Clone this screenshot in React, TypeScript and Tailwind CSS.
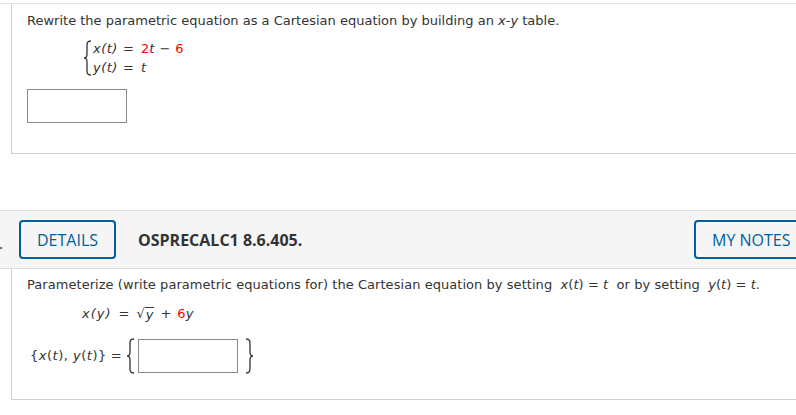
import React from "react";

const Brace = ({ h, className }: { h: number; className?: string }) => (
  <svg width="9" height={h} viewBox={`0 0 9 ${h}`} className={className} fill="none" stroke="#333" strokeWidth="1.3">
    <path d={`M8 1 C4 1 4 3 4 6 L4 ${h / 2 - 4} C4 ${h / 2 - 1} 3 ${h / 2} 1 ${h / 2} C3 ${h / 2} 4 ${h / 2 + 1} 4 ${h / 2 + 4} L4 ${h - 6} C4 ${h - 3} 4 ${h - 1} 8 ${h - 1}`} />
  </svg>
);

const BraceR = ({ h, className }: { h: number; className?: string }) => (
  <svg width="9" height={h} viewBox={`0 0 9 ${h}`} className={className} fill="none" stroke="#333" strokeWidth="1.3">
    <path d={`M1 1 C5 1 5 3 5 6 L5 ${h / 2 - 4} C5 ${h / 2 - 1} 6 ${h / 2} 8 ${h / 2} C6 ${h / 2} 5 ${h / 2 + 1} 5 ${h / 2 + 4} L5 ${h - 6} C5 ${h - 3} 5 ${h - 1} 1 ${h - 1}`} />
  </svg>
);

export default function App() {
  const verd = { fontFamily: '"DejaVu Sans", Verdana, sans-serif' };
  return (
    <div className="w-[796px] h-[415px] bg-white overflow-hidden text-[#333]" style={verd}>
      <div className="h-[3px]" />
      <div className="border-t border-[#e3e3e3]">
        <div className="ml-[11px] border-l border-b border-[#cfcfcf] h-[150px] pl-[15px] pt-[9px] text-[13px] leading-[16px]">
          <div>
            Rewrite the parametric equation as a Cartesian equation by building an <i>x</i>-<i>y</i> table.
          </div>
          <div className="flex items-center ml-[56px] mt-[10px]">
            <Brace h={36} />
            <div className="leading-[19px] ml-[1px]">
              <div className="flex">
                <span className="w-[30px] italic tracking-[0.5px]">x(t)</span>
                <span className="w-[18px]">=</span>
                <span className="text-[#f00]">2</span>
                <i>t</i>
                <span className="mx-[5px]">−</span>
                <span className="text-[#f00]">6</span>
              </div>
              <div className="flex">
                <span className="w-[30px] italic tracking-[0.5px]">y(t)</span>
                <span className="w-[18px]">=</span>
                <i>t</i>
              </div>
            </div>
          </div>
          <div className="mt-[12px] w-[100px] h-[34px] border border-[#8a8a8a]" />
        </div>
      </div>
      <div className="h-[56px]" />
      <div
        className="h-[59px] bg-[#f5f5f5] border-t border-b border-[#dcdcdc] flex items-center relative"
        style={{ fontFamily: '"Open Sans", sans-serif' }}
      >
        <span className="absolute left-[-1px] top-[20px] text-[16px]">.</span>
        <div className="ml-[19px] w-[97px] h-[39px] border-2 border-[#00609c] rounded-[4px] flex items-center justify-center text-[16px] text-[#00609c] font-medium">
          DETAILS
        </div>
        <div className="ml-[22px] text-[16px] font-bold text-[#333]">OSPRECALC1 8.6.405.</div>
        <div className="ml-auto mr-[-20px] w-[122px] h-[39px] border-2 border-[#00609c] rounded-[4px] flex items-center pl-[16px] text-[16px] text-[#00609c] font-medium">
          MY NOTES
        </div>
      </div>
      <div className="ml-[11px] border-l border-b border-[#cfcfcf] h-[131px] pl-[15px] pt-[8px] text-[13px] leading-[16px]">
        <div className="tracking-[0.05px]">
          Parameterize (write parametric equations for) the Cartesian equation by setting&nbsp; <i>x</i>(<i>t</i>) = <i>t</i>&nbsp; or by setting&nbsp; <i>y</i>(<i>t</i>) = <i>t</i>.
        </div>
        <div className="flex items-end ml-[55px] mt-[11px] h-[18px]">
          <span className="italic tracking-[1px]">x(y)</span>
          <span className="mx-[7px]">=</span>
          <span>√</span>
          <span className="border-t border-[#333] italic leading-[14px] px-[1px]">y</span>
          <span className="mx-[6px]">+</span>
          <span className="text-[#f00]">6</span>
          <i>y</i>
        </div>
        <div className="flex items-center mt-[16px] ml-[3px]">
          <span className="tracking-[0.5px]">{"{"}<i>x</i>(<i>t</i>), <i>y</i>(<i>t</i>){"}"}</span>
          <span className="ml-[4px]">=</span>
          <Brace h={36} className="ml-[4px]" />
          <div className="ml-[3px] w-[100px] h-[34px] border border-[#8a8a8a]" />
          <BraceR h={36} className="ml-[7px]" />
        </div>
      </div>
    </div>
  );
}
